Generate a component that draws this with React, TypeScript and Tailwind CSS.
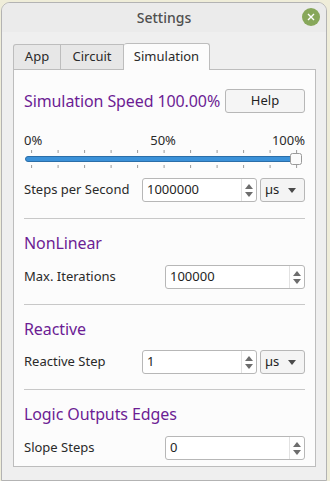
import { ReactNode } from "react";

const purple = "text-[#6c1d94]";

const SpinArrows = () => (
  <div className="flex flex-col items-center justify-center w-[15px] border-l border-[#e2e2e2] gap-[3px]">
    <svg width="8" height="5" viewBox="0 0 8 5">
      <path d="M0 5 L4 0 L8 5 Z" fill="#6d6d6d" />
    </svg>
    <svg width="8" height="5" viewBox="0 0 8 5">
      <path d="M0 0 L4 5 L8 0 Z" fill="#6d6d6d" />
    </svg>
  </div>
);

const SpinBox = ({ value, width }: { value: string; width: string }) => (
  <div
    className={`${width} h-[24px] flex bg-white border border-[#b7b7b7] rounded-[3px]`}
  >
    <div className="flex-1 flex items-center pl-[4px] text-[13px] text-[#1f1f1f]">
      {value}
    </div>
    <SpinArrows />
  </div>
);

const UnitCombo = () => (
  <div className="w-[45px] h-[24px] flex items-center justify-between pl-[4px] pr-[8px] bg-[#f4f4f4] border border-[#b7b7b7] rounded-[3px] text-[13px] text-[#1f1f1f]">
    <span>µs</span>
    <svg width="8" height="5" viewBox="0 0 8 5">
      <path d="M0 0 L4 5 L8 0 Z" fill="#4a4a4a" />
    </svg>
  </div>
);

const Row = ({ label, children }: { label: string; children: ReactNode }) => (
  <div className="flex items-center justify-between">
    <span className="text-[13px] text-[#2a2a2a]">{label}</span>
    <div className="flex gap-[3px]">{children}</div>
  </div>
);

const Heading = ({ children }: { children: ReactNode }) => (
  <div className={`h-[24px] flex items-center whitespace-nowrap text-[16px] tracking-[-0.1px] ${purple}`}>
    {children}
  </div>
);

const Sep = () => <div className="h-px bg-[#c8c8c8]" />;

const Slider = () => {
  const ticks = Array.from({ length: 11 }, (_, i) => 7.6 + i * 26.5);
  return (
    <svg width="280" height="20" viewBox="0 0 280 20" className="block">
      {ticks.map((x, i) => (
        <g key={i}>
          <line x1={x} y1="1" x2={x} y2="4" stroke="#9a9a9a" />
          <line x1={x} y1="16" x2={x} y2="19" stroke="#9a9a9a" />
        </g>
      ))}
      <rect x="1.5" y="7.5" width="273" height="5" rx="2.5" fill="#3b91d8" stroke="#2b6ea8" />
      <rect x="266.5" y="4.5" width="11" height="11" rx="2" fill="#fbfbfb" stroke="#9a9a9a" />
    </svg>
  );
};

export default function App() {
  return (
    <div
      className="w-[330px] h-[481px] bg-[#efedd9] pt-[2px] pl-[1px] overflow-hidden"
      style={{ fontFamily: '"Noto Sans", "Open Sans", sans-serif' }}
    >
      <div className="w-[326px] h-[479px] flex flex-col bg-[#efefef] border border-[#b3b3b3] rounded-t-[9px] overflow-hidden">
        {/* title bar */}
        <div className="h-[29px] shrink-0 flex items-center justify-center relative bg-[#ebebeb]">
          <span className="text-[14px] font-medium text-[#4f4f4f]">Settings</span>
          <div className="absolute right-[6px] top-[5px] w-[18px] h-[18px] rounded-full bg-[#87a75a] flex items-center justify-center">
            <svg width="8" height="8" viewBox="0 0 8 8">
              <path d="M1 1 L7 7 M7 1 L1 7" stroke="#fff" strokeWidth="1.4" />
            </svg>
          </div>
        </div>

        {/* tabs */}
        <div className="pt-[11px] pl-[11px] flex items-end">
          <div className="w-[48px] h-[25px] flex items-center justify-center bg-[#e7e7e7] border border-[#bdbdbd] border-b-0 rounded-tl-[3px] text-[13px] text-[#2a2a2a]">
            App
          </div>
          <div className="w-[63px] h-[25px] flex items-center justify-center bg-[#e7e7e7] border border-[#bdbdbd] border-l-0 border-b-0 text-[13px] text-[#2a2a2a]">
            Circuit
          </div>
          <div className="w-[86px] h-[27px] flex items-center justify-center bg-[#fcfcfc] border border-[#bdbdbd] border-b-0 border-l-0 rounded-t-[3px] text-[13px] text-[#2a2a2a] -mb-px relative z-10">
            Simulation
          </div>
        </div>

        {/* panel */}
        <div className="ml-[11px] w-[303px] h-[398px] bg-[#fcfcfc] border border-[#bdbdbd] px-[10px] pt-[19px] flex flex-col">
          <div className="flex items-center justify-between">
            <Heading>Simulation Speed 100.00%</Heading>
            <div className="w-[80px] h-[24px] flex items-center justify-center bg-[#f5f5f5] border border-[#b7b7b7] rounded-[3px] text-[13px] text-[#1f1f1f]">
              Help
            </div>
          </div>

          <div className="mt-[20px] h-[16px] flex justify-between items-center text-[13px] text-[#2a2a2a]">
            <span>0%</span>
            <span className="pl-[12px]">50%</span>
            <span>100%</span>
          </div>
          <div>
            <Slider />
          </div>

          <div className="mt-[9px]">
            <Row label="Steps per Second">
              <SpinBox value="1000000" width="w-[115px]" />
              <UnitCombo />
            </Row>
          </div>

          <div className="mt-[16px]">
            <Sep />
          </div>

          <div className="mt-[12px]">
            <Heading>NonLinear</Heading>
          </div>
          <div className="mt-[10px]">
            <Row label="Max. Iterations">
              <SpinBox value="100000" width="w-[140px]" />
            </Row>
          </div>

          <div className="mt-[15px]">
            <Sep />
          </div>

          <div className="mt-[12px]">
            <Heading>Reactive</Heading>
          </div>
          <div className="mt-[9px]">
            <Row label="Reactive Step">
              <SpinBox value="1" width="w-[115px]" />
              <UnitCombo />
            </Row>
          </div>

          <div className="mt-[15px]">
            <Sep />
          </div>

          <div className="mt-[12px]">
            <Heading>Logic Outputs Edges</Heading>
          </div>
          <div className="mt-[10px]">
            <Row label="Slope Steps">
              <SpinBox value="0" width="w-[140px]" />
            </Row>
          </div>
        </div>
      </div>
    </div>
  );
}
